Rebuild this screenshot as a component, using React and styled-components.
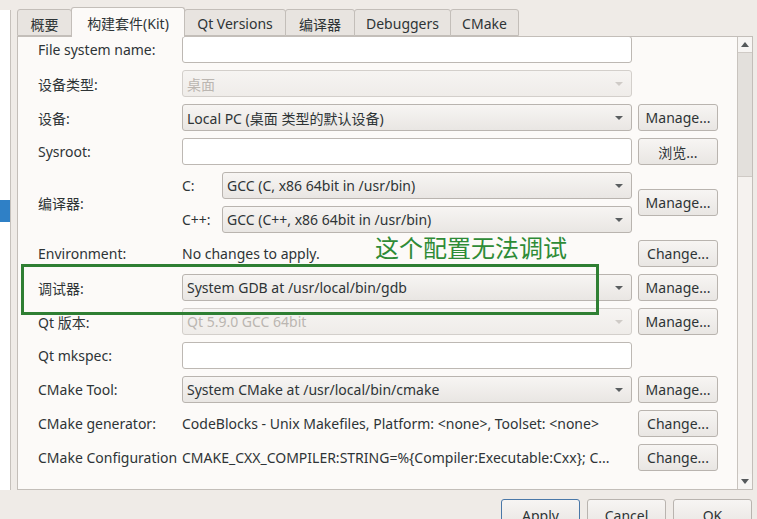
import React from 'react';
import styled, { createGlobalStyle } from 'styled-components';

const GlobalStyle = createGlobalStyle`
  html, body {
    margin: 0;
    padding: 0;
    background: #efebe7;
    overflow: hidden;
  }
  body {
    font-family: "Noto Sans", "Noto Sans CJK SC", sans-serif;
    font-size: 14px;
    color: #2e3436;
  }
`;

const Window = styled.div`
  position: relative;
  width: 757px;
  height: 519px;
  display: flex;
  flex-direction: column;
  overflow: hidden;
`;

const Main = styled.div`
  display: flex;
  flex-shrink: 0;
  height: 490px;
  gap: 6px;
`;

const SideList = styled.div`
  margin-top: 10px;
  width: 10px;
  background: #ffffff;
  border-right: 1px solid #c6c1bc;
  display: flex;
  flex-direction: column;
  padding-top: 190px;
`;

const SideItem = styled.div`
  height: 22px;
  background: #2f80c6;
`;

const TabWidget = styled.div`
  width: 736px;
  display: flex;
  flex-direction: column;
`;

const TabBar = styled.div`
  display: flex;
  align-items: flex-end;
  height: 36px;
  flex-shrink: 0;
  position: relative;
  z-index: 1;
`;

const Tab = styled.div`
  box-sizing: border-box;
  width: ${(p) => p.$w}px;
  height: ${(p) => (p.$active ? 30 : 27)}px;
  margin-bottom: ${(p) => (p.$active ? -1 : 0)}px;
  margin-left: -1px;
  &:first-child { margin-left: 0; }
  border: 1px solid #c3beb9;
  border-bottom: ${(p) => (p.$active ? 'none' : '1px solid #c3beb9')};
  border-radius: 3px 3px 0 0;
  background: ${(p) => (p.$active ? '#fcfaf8' : '#e8e4e0')};
  display: flex;
  align-items: center;
  justify-content: center;
  padding-top: ${(p) => (p.$active ? 1 : 2)}px;
  white-space: nowrap;
  position: relative;
  z-index: ${(p) => (p.$active ? 2 : 0)};
`;

const Panel = styled.div`
  flex: 1;
  min-height: 0;
  box-sizing: border-box;
  border: 1px solid #c3beb9;
  background: #fcfaf8;
  display: flex;
  overflow: hidden;
`;

const ScrollArea = styled.div`
  flex: 1;
  overflow: hidden;
  padding-left: 20px;
`;

const Form = styled.div`
  margin-top: -1px;
  display: grid;
  grid-template-columns: 138px 450px 80px;
  grid-auto-rows: 27px;
  column-gap: 6px;
  row-gap: 7px;
`;

const Label = styled.div`
  display: flex;
  align-items: center;
  white-space: nowrap;
  grid-row: span ${(p) => p.$span || 1};
`;

const ValueText = styled.div`
  display: flex;
  align-items: center;
  white-space: nowrap;
  overflow: hidden;
`;

const LineEdit = styled.div`
  box-sizing: border-box;
  background: #ffffff;
  border: 1px solid #bdb8b3;
  border-radius: 3px;
`;

const Combo = styled.div`
  box-sizing: border-box;
  border: 1px solid ${(p) => (p.$disabled ? '#d3cfcb' : '#b9b4af')};
  border-radius: 3px;
  background: ${(p) =>
    p.$disabled
      ? 'linear-gradient(#f6f4f2, #efece9)'
      : 'linear-gradient(#f7f5f3, #e9e6e3)'};
  color: ${(p) => (p.$disabled ? '#bbb6b1' : '#2e3436')};
  display: flex;
  align-items: center;
  padding: 0 8px 0 4px;
  white-space: nowrap;
  &::after {
    content: '';
    margin-left: auto;
    border-left: 4px solid transparent;
    border-right: 4px solid transparent;
    border-top: 4px solid ${(p) => (p.$disabled ? '#cfcbc7' : '#5a5e60')};
  }
`;

const Button = styled.div`
  box-sizing: border-box;
  border: 1px solid ${(p) => (p.$focus ? '#4a78a8' : '#b9b4af')};
  border-radius: 3px;
  background: linear-gradient(#f7f5f3, #e9e6e3);
  display: flex;
  align-items: center;
  justify-content: center;
  white-space: nowrap;
  grid-row: span ${(p) => p.$span || 1};
  align-self: center;
  height: 27px;
`;

const Empty = styled.div``;

const CompilerGrid = styled.div`
  grid-row: span 2;
  display: grid;
  grid-template-columns: 40px 410px;
  grid-auto-rows: 27px;
  row-gap: 7px;
`;

const ScrollBar = styled.div`
  width: 14px;
  border-left: 1px solid #c8c3be;
  display: flex;
  flex-direction: column;
  background: #f5f2ef;
`;

const ScrollButton = styled.div`
  height: 15px;
  display: flex;
  align-items: center;
  justify-content: center;
  background: #f7f5f3;
  &::after {
    content: '';
    border-left: 4px solid transparent;
    border-right: 4px solid transparent;
    ${(p) => (p.$up ? 'border-bottom' : 'border-top')}: 5px solid #55595b;
  }
`;

const Track = styled.div`
  flex: 1;
  display: flex;
  flex-direction: column;
`;

const Handle = styled.div`
  height: 125px;
  background: #e3e0dc;
  border-top: 1px solid #cfcac5;
  border-bottom: 1px solid #cfcac5;
  box-sizing: border-box;
`;

const ButtonBar = styled.div`
  display: flex;
  justify-content: flex-end;
  gap: 7px;
  padding: 9px 5px 0 0;
`;

const DialogButton = styled(Button)`
  width: 79px;
  height: 28px;
  align-items: flex-start;
  padding-top: 6px;
`;

const Annotation = styled.div`
  position: absolute;
  left: 21px;
  top: 264px;
  width: 578px;
  height: 51px;
  box-sizing: border-box;
  border: 3px solid #2f7f33;
  pointer-events: none;
`;

const AnnotationText = styled.div`
  position: absolute;
  left: 375px;
  top: 229px;
  font-family: "Noto Sans CJK SC", sans-serif;
  font-size: 24px;
  color: #2e8b36;
  white-space: nowrap;
`;

const tabs = [
  ['概要', 55],
  ['构建套件(Kit)', 114],
  ['Qt Versions', 102],
  ['编译器', 70],
  ['Debuggers', 97],
  ['CMake', 69],
];

export default function App() {
  return (
    <Window>
      <GlobalStyle />
      <Main>
        <SideList>
          <SideItem />
        </SideList>
        <TabWidget>
          <TabBar>
            {tabs.map(([t, w], i) => (
              <Tab key={t} $w={w} $active={i === 1}>{t}</Tab>
            ))}
          </TabBar>
          <Panel>
            <ScrollArea>
              <Form>
                <Label>File system name:</Label>
                <LineEdit />
                <Empty />

                <Label>设备类型:</Label>
                <Combo $disabled>桌面</Combo>
                <Empty />

                <Label>设备:</Label>
                <Combo>Local PC (桌面 类型的默认设备)</Combo>
                <Button>Manage...</Button>

                <Label>Sysroot:</Label>
                <LineEdit />
                <Button>浏览...</Button>

                <Label $span={2}>编译器:</Label>
                <CompilerGrid>
                  <ValueText>C:</ValueText>
                  <Combo>GCC (C, x86 64bit in /usr/bin)</Combo>
                  <ValueText>C++:</ValueText>
                  <Combo>GCC (C++, x86 64bit in /usr/bin)</Combo>
                </CompilerGrid>
                <Button $span={2}>Manage...</Button>

                <Label>Environment:</Label>
                <ValueText>No changes to apply.</ValueText>
                <Button>Change...</Button>

                <Label>调试器:</Label>
                <Combo>System GDB at /usr/local/bin/gdb</Combo>
                <Button>Manage...</Button>

                <Label>Qt 版本:</Label>
                <Combo $disabled>Qt 5.9.0 GCC 64bit</Combo>
                <Button>Manage...</Button>

                <Label>Qt mkspec:</Label>
                <LineEdit />
                <Empty />

                <Label>CMake Tool:</Label>
                <Combo>System CMake at /usr/local/bin/cmake</Combo>
                <Button>Manage...</Button>

                <Label>CMake generator:</Label>
                <ValueText>CodeBlocks - Unix Makefiles, Platform: &lt;none&gt;, Toolset: &lt;none&gt;</ValueText>
                <Button>Change...</Button>

                <Label>CMake Configuration</Label>
                <ValueText>CMAKE_CXX_COMPILER:STRING=%{'{'}Compiler:Executable:Cxx{'}'}; C...</ValueText>
                <Button>Change...</Button>
              </Form>
            </ScrollArea>
            <ScrollBar>
              <ScrollButton $up />
              <Track>
                <Handle />
              </Track>
              <ScrollButton />
            </ScrollBar>
          </Panel>
        </TabWidget>
      </Main>
      <ButtonBar>
        <DialogButton $focus>Apply</DialogButton>
        <DialogButton>Cancel</DialogButton>
        <DialogButton>OK</DialogButton>
      </ButtonBar>
      <Annotation />
      <AnnotationText>这个配置无法调试</AnnotationText>
    </Window>
  );
}
